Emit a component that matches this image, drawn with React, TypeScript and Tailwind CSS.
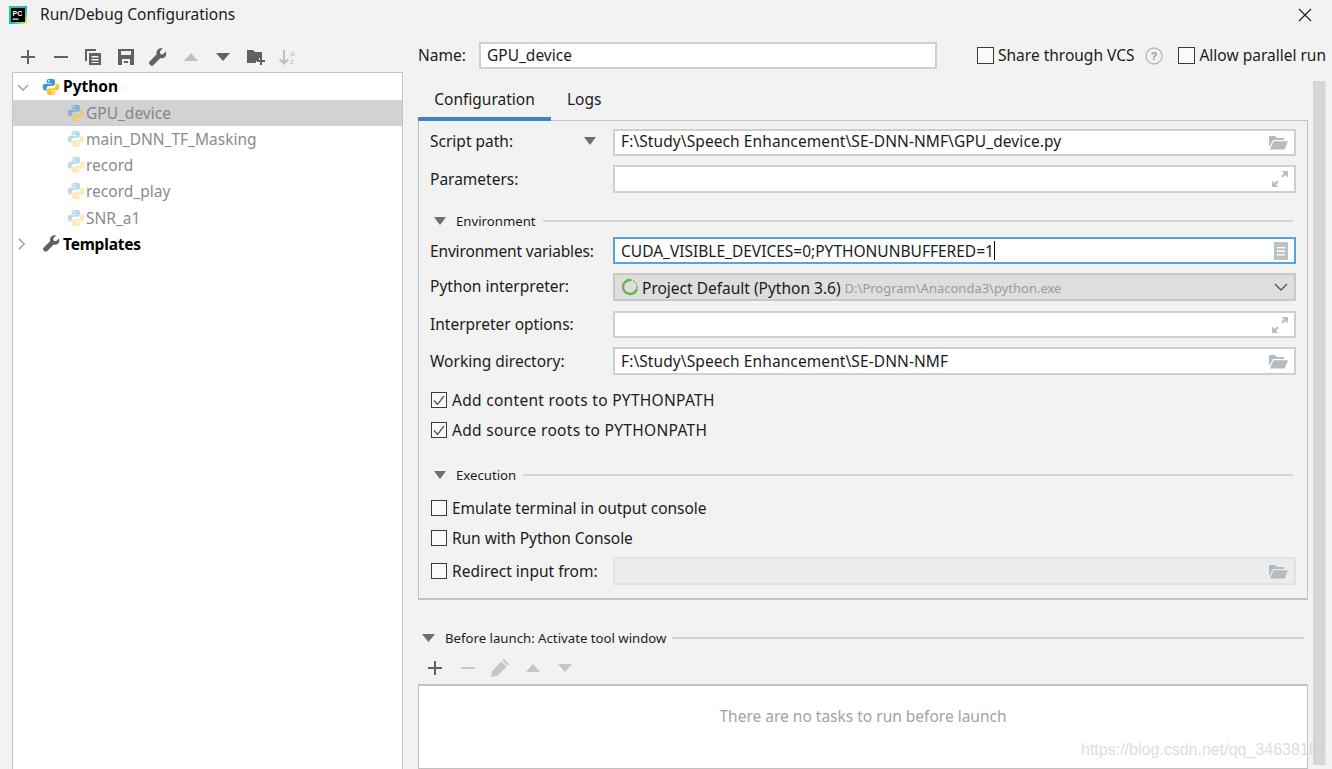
import { ReactNode } from "react";

const SNAKE =
  "M11.9 1C8 1 6.3 2.1 6.3 4v2.5h5.9v1H4.1C2 7.5 1 9.4 1 12c0 2.6 1 4.5 3 4.5h2.2v-3c0-1.9 1.5-3.3 3.4-3.3h4.9c1.6 0 2.8-1.2 2.8-2.8V4c0-2-2.1-3-5.4-3z";

function PythonIcon({ className = "" }: { className?: string }) {
  return (
    <svg viewBox="0 0 24 24" className={`h-[18px] w-[18px] shrink-0 ${className}`}>
      <path d={SNAKE} fill="#3d97cf" />
      <circle cx="9" cy="3.9" r="1.1" fill="#fff" />
      <g transform="rotate(180 12 12)">
        <path d={SNAKE} fill="#fbc62c" />
        <circle cx="9" cy="3.9" r="1.1" fill="#fff" />
      </g>
    </svg>
  );
}

function Triangle({ up = false, color = "#6e6e6e", w = 14 }: { up?: boolean; color?: string; w?: number }) {
  return (
    <svg width={w} height={8} viewBox="0 0 14 8" preserveAspectRatio="none" className="shrink-0">
      <path d={up ? "M7 0l7 8H0z" : "M0 0h14L7 8z"} fill={color} />
    </svg>
  );
}

function PlusIcon() {
  return (
    <svg width="14" height="14" viewBox="0 0 14 14">
      <path d="M6 0h2v6h6v2H8v6H6V8H0V6h6z" fill="#5f6265" />
    </svg>
  );
}

function MinusIcon({ color = "#5f6265" }: { color?: string }) {
  return (
    <svg width="14" height="14" viewBox="0 0 14 14">
      <path d="M0 6h14v2H0z" fill={color} />
    </svg>
  );
}

function WrenchIcon({ color = "#5f6265", size = 18 }: { color?: string; size?: number }) {
  return (
    <svg width={size} height={size} viewBox="0 0 18 18">
      <path
        d="M16.8 3.6l-3 3-2.4-.6-.6-2.4 3-3c-2-.7-4.2-.1-5.4 1.4-1 1.3-1.2 2.9-.7 4.3L.6 13.6c-.7.7-.7 1.9 0 2.7l.9.9c.8.7 2 .7 2.7 0L11.5 10c1.4.5 3 .3 4.2-.7 1.5-1.2 1.9-3.7 1.1-5.7z"
        fill={color}
      />
    </svg>
  );
}

function FolderOpenIcon() {
  return (
    <svg width="19" height="15" viewBox="0 0 19 15" className="shrink-0">
      <path d="M0 1h6l2 2h7v2H4L1 11H0z" fill="#b4bcc3" />
      <path d="M4.6 6.2H19L15.6 14.5H0.8z" fill="#b4bcc3" />
    </svg>
  );
}

function ExpandIcon() {
  return (
    <svg width="16" height="16" viewBox="0 0 16 16" fill="#b9bfc4" className="shrink-0">
      <path d="M9.5 0H16v6.5l-2.4-2.4-2.7 2.7-1.7-1.7 2.7-2.7zM6.5 16H0V9.5l2.4 2.4 2.7-2.7 1.7 1.7-2.7 2.7z" />
    </svg>
  );
}

function Checkbox({ checked = false, big = false }: { checked?: boolean; big?: boolean }) {
  return (
    <span
      className={`flex shrink-0 items-center justify-center border-[1.5px] border-[#3a3a3a] bg-[#fafafa] ${
        big ? "h-[17px] w-[17px]" : "h-[16px] w-[16px]"
      }`}
    >
      {checked && (
        <svg width="12" height="11" viewBox="0 0 12 11" fill="none">
          <path d="M1 5.5l3.5 4L11 1" stroke="#555" strokeWidth="1.3" />
        </svg>
      )}
    </span>
  );
}

function CheckRow({ label, checked, className = "" }: { label: string; checked?: boolean; className?: string }) {
  return (
    <div className={`flex h-[20px] items-center gap-[5px] pl-px ${className}`}>
      <Checkbox checked={checked} />
      <span>{label}</span>
    </div>
  );
}

function Field({
  label,
  text,
  icon,
  className = "",
  h = "h-[27px]",
  boxClass = "border-[#cfcfcf] bg-white",
  lift = "",
  children,
}: {
  label?: ReactNode;
  text?: string;
  icon?: ReactNode;
  className?: string;
  h?: string;
  boxClass?: string;
  lift?: string;
  children?: ReactNode;
}) {
  return (
    <div className={`flex items-center ${h} ${className}`}>
      <div className={`flex w-[183px] shrink-0 items-center ${lift}`}>{label}</div>
      <div className={`flex h-full flex-1 items-center justify-between border-2 pl-[6px] pr-[6px] ${boxClass}`}>
        {children ?? <span className={`tracking-[0.09px] ${lift}`}>{text}</span>}
        {icon}
      </div>
    </div>
  );
}

function SectionTitle({ label, className = "" }: { label: string; className?: string }) {
  return (
    <div className={`flex h-[20px] items-center pl-[4px] pr-[3px] ${className}`}>
      <Triangle w={12} />
      <span className="ml-[10px] text-[13.2px]">{label}</span>
      <div className="ml-[7px] h-[2px] flex-1 bg-[#d4d4d4]" />
    </div>
  );
}

const treeChildren = ["main_DNN_TF_Masking", "record", "record_play", "SNR_a1"];

export default function App() {
  return (
    <div className="relative flex h-[769px] w-[1332px] flex-col overflow-hidden bg-[#f2f2f2] font-['Noto_Sans','Open_Sans',sans-serif] text-[15.5px] leading-[18px] text-[#1c1c1c]">
      <div className="flex h-[30px] shrink-0 items-center pl-[9px] pr-[20px]">
        <svg width="18" height="18" viewBox="0 0 18 18" className="shrink-0">
          <defs>
            <linearGradient id="pc" x1="0" y1="0" x2="1" y2="1">
              <stop offset="0" stopColor="#21d789" />
              <stop offset="0.55" stopColor="#16b6c9" />
              <stop offset="1" stopColor="#fcf84a" />
            </linearGradient>
          </defs>
          <rect width="18" height="18" fill="url(#pc)" />
          <rect x="2" y="2" width="14" height="14" fill="#000" />
          <text x="3.5" y="9.5" fill="#fff" fontSize="7" fontWeight="700" fontFamily="Liberation Sans">
            PC
          </text>
          <rect x="3.500" y="12.500" width="6" height="1.200" fill="#fff" />
        </svg>
        <span className="mb-[2px] ml-[13px]">Run/Debug Configurations</span>
        <svg width="14" height="14" viewBox="0 0 14 14" className="ml-auto">
          <path d="M1 1l12 12M13 1L1 13" stroke="#222" strokeWidth="1.2" fill="none" />
        </svg>
      </div>

      <div className="flex min-h-0 flex-1">
        <div className="flex w-[403px] shrink-0 flex-col pl-[12px] pt-[12px]">
          <div className="flex h-[30px] shrink-0 items-center">
            {[
              <PlusIcon />,
              <MinusIcon />,
              <svg width="16" height="16" viewBox="0 0 16 16">
                <path d="M0 0h11v2H2v10H0z" fill="#5f6265" />
                <path fillRule="evenodd" d="M4 4h12v12H4zM6.5 7v1.5h7V7zm0 3v1.5h7V10zm0 3v1h7v-1z" fill="#5f6265" />
              </svg>,
              <svg width="16" height="16" viewBox="0 0 16 16">
                <path fillRule="evenodd" d="M0 0h16v16H0zM3 2v4h10V2zM4 10v6h8v-6z" fill="#5f6265" />
                <path d="M6 12h4v2H6z" fill="#5f6265" />
              </svg>,
              <WrenchIcon />,
              <Triangle up color="#c0c0c0" />,
              <Triangle color="#5f6265" />,
              <svg width="18" height="16" viewBox="0 0 18 16">
                <path d="M0 1h6l2 2h7v6h-3v3H9v2H0z" fill="#5f6265" />
                <path d="M13 10h2v3h3v2h-3v3h-2v-3h-3v-2h3z" fill="#5f6265" transform="translate(0 -2)" />
              </svg>,
              <svg width="18" height="17" viewBox="0 0 18 17">
                <path d="M4 1h2v11l2.5-2.5L10 11l-5 5-5-5 1.500-1.500L4 12z" fill="#c0c0c0" />
                <text x="11" y="7" fontSize="8" fill="#c0c0c0" fontFamily="Liberation Sans">a</text>
                <text x="11" y="15" fontSize="8" fill="#c0c0c0" fontFamily="Liberation Sans">z</text>
              </svg>,
            ].map((icon, i) => (
              <div key={i} className="flex w-[32.5px] shrink-0 items-center justify-center">
                {icon}
              </div>
            ))}
          </div>

          <div className="flex-1 border-x border-t border-[#c4c4c4] bg-white pt-px">
            <div className="flex h-[26px] items-center">
              <svg width="12" height="7" viewBox="0 0 14 8" className="ml-[4px]" fill="none">
                <path d="M1 1l6 6 6-6" stroke="#a8a8a8" strokeWidth="1.8" />
              </svg>
              <PythonIcon className="ml-[13px]" />
              <span className="mb-[2px] ml-[3px] font-bold text-black">Python</span>
            </div>
            <div className="flex h-[26px] items-center bg-[#d2d2d2] pl-[54px] text-[#84878a]">
              <PythonIcon className="opacity-50" />
              <span className="ml-[1px]">GPU_device</span>
            </div>
            {treeChildren.map((name) => (
              <div key={name} className="flex h-[26.2px] items-center pl-[54px] text-[#898c8f]">
                <PythonIcon className="opacity-35" />
                <span className="ml-[1px]">{name}</span>
              </div>
            ))}
            <div className="flex h-[26px] items-center">
              <svg width="7" height="12" viewBox="0 0 8 14" className="ml-[5px]" fill="none">
                <path d="M1 1l6 6-6 6" stroke="#a8a8a8" strokeWidth="1.8" />
              </svg>
              <span className="ml-[18px]">
                <WrenchIcon size={17} />
              </span>
              <span className="ml-[3px] font-bold tracking-[-0.2px] text-black">Templates</span>
            </div>
          </div>
        </div>

        <div className="ml-[15px] flex min-w-0 flex-1 flex-col pt-[12px]">
          <div className="flex h-[27px] shrink-0 items-center">
            <span className="mb-[2px] w-[61px] shrink-0">Name:</span>
            <div className="flex h-full w-[458px] shrink-0 items-center border-2 border-[#d0d0d0] bg-white pb-[2px] pl-[6px]">
              GPU_device
            </div>
            <span className="ml-[40px]">
              <Checkbox big />
            </span>
            <span className="mb-[2px] ml-[4px]">Share through VCS</span>
            <svg width="18" height="18" viewBox="0 0 18 18" className="ml-[11px] shrink-0">
              <circle cx="9" cy="9" r="8" fill="none" stroke="#b5b5b5" strokeWidth="1.3" />
              <text x="9" y="13" textAnchor="middle" fontSize="11" fontWeight="700" fill="#9a9a9a" fontFamily="Liberation Sans">
                ?
              </text>
            </svg>
            <span className="ml-[15px]">
              <Checkbox big />
            </span>
            <span className="mb-[2px] ml-[4px] whitespace-nowrap">Allow parallel run</span>
          </div>

          <div className="mt-[12px] flex min-h-0 flex-1">
            <div className="flex w-[890px] shrink-0 flex-col">
              <div className="relative z-10 flex h-[40px] shrink-0">
                <div className="flex w-[133px] items-center justify-center border-b-4 border-[#4083c9] pb-[1px]">
                  Configuration
                </div>
                <div className="ml-[16px] flex items-center pb-[4px]">Logs</div>
              </div>

              <div className="-mt-px h-[480px] shrink-0 border border-b-2 border-[#c2c2c2] pl-[11px] pr-[11px]">
                <Field
                  className="mt-[8px]"
                  lift="mb-[3px]"
                  label={
                    <>
                      <span className="w-[154px]">Script path:</span>
                      <Triangle w={12} />
                    </>
                  }
                  text="F:\Study\Speech Enhancement\SE-DNN-NMF\GPU_device.py"
                  icon={<FolderOpenIcon />}
                />
                <Field className="mt-[9px]" h="h-[28px]" label="Parameters:" icon={<ExpandIcon />} />

                <SectionTitle label="Environment" className="mt-[18px]" />

                <Field
                  className="mt-[6px]"
                  label={<span className="tracking-[-0.15px]">Environment variables:</span>}
                  boxClass="border-[#5aa2dc] bg-white"
                  icon={
                    <svg width="14" height="18" viewBox="0 0 14 18" className="shrink-0">
                      <path fillRule="evenodd" d="M0 0h14v18H0zM3 5v1.500h8V5zm0 3.500V10h8V8.500zM3 12v1.500h8V12z" fill="#bcc1c5" />
                    </svg>
                  }
                >
                  <span className="flex items-center">
                    CUDA_VISIBLE_DEVICES=0;PYTHONUNBUFFERED=1
                    <span className="h-[19px] w-px bg-black" />
                  </span>
                </Field>

                <Field
                  className="mt-[9px]"
                  h="h-[28px]"
                  label={<span className="mb-[2px]">Python interpreter:</span>}
                  boxClass="border-[#c9c9c9] bg-[#dedede]"
                  icon={
                    <svg width="14" height="8" viewBox="0 0 14 8" fill="none" className="shrink-0">
                      <path d="M1 1l6 6 6-6" stroke="#555" strokeWidth="1.3" />
                    </svg>
                  }
                >
                  <span className="flex items-center whitespace-nowrap pt-[1px]">
                    <svg width="18" height="18" viewBox="0 0 18 18" fill="none" className="mb-[2px] mr-[3px] shrink-0">
                      <circle cx="9" cy="9" r="7" stroke="#6cb64f" strokeWidth="2.400" strokeDasharray="32 12" strokeDashoffset="-2" />
                      <circle cx="9" cy="9" r="7" stroke="#6cb64f" strokeWidth="1.600" strokeDasharray="1.500 1.500" />
                    </svg>
                    Project Default (Python 3.6)
                    <span className="ml-[4px] text-[13px] text-[#9b9b9b]">D:\Program\Anaconda3\python.exe</span>
                  </span>
                </Field>

                <Field className="mt-[10px]" lift="mb-[2px]" label="Interpreter options:" icon={<ExpandIcon />} />
                <Field
                  className="mt-[9px]"
                  h="h-[28px]"
                  label="Working directory:"
                  text="F:\Study\Speech Enhancement\SE-DNN-NMF"
                  icon={<FolderOpenIcon />}
                />

                <CheckRow className="mt-[15px] tracking-[0.3px]" checked label="Add content roots to PYTHONPATH" />
                <CheckRow className="mt-[10px] tracking-[0.3px]" checked label="Add source roots to PYTHONPATH" />

                <SectionTitle label="Execution" className="mt-[25px]" />

                <CheckRow className="mt-[13px] tracking-[-0.05px]" label="Emulate terminal in output console" />
                <CheckRow className="mt-[10px] tracking-[-0.05px]" label="Run with Python Console" />
                <Field
                  className="mt-[9px]"
                  h="h-[28px]"
                  label={
                    <div className="mb-[1px] flex items-center gap-[5px] pl-px">
                      <Checkbox />
                      <span>Redirect input from:</span>
                    </div>
                  }
                  boxClass="border-[#e2e2e2] bg-[#ececec]"
                  icon={<FolderOpenIcon />}
                />
              </div>

              <div className="mt-[28px] flex h-[20px] shrink-0 items-center pl-[4px] pr-[4px]">
                <Triangle w={13} />
                <span className="ml-[10px] text-[13.2px]">Before launch: Activate tool window</span>
                <div className="ml-[6px] h-[1.5px] flex-1 bg-[#d0d0d0]" />
              </div>

              <div className="mt-[8px] flex h-[24px] shrink-0 items-center pl-[1px]">
                {[
                  <PlusIcon />,
                  <MinusIcon color="#c6c6c6" />,
                  <svg width="18" height="18" viewBox="0 0 18 18">
                    <path d="M13 0l5 5-1.500 1.500-5-5zM10.500 2.500l5 5L6 17l-6 1 1-6z" fill="#c6c6c6" />
                  </svg>,
                  <Triangle up color="#c6c6c6" />,
                  <Triangle color="#c6c6c6" />,
                ].map((icon, i) => (
                  <div key={i} className="flex w-[32.500px] shrink-0 items-center justify-center">
                    {icon}
                  </div>
                ))}
              </div>

              <div className="mt-[4px] flex h-[85px] shrink-0 items-start justify-center border border-t-2 border-[#c2c2c2] bg-white pt-[21px] text-[#a3a3a3]">
                There are no tasks to run before launch
              </div>
            </div>

            <div className="ml-[5px] mb-[4px] w-[13px] shrink-0 border-r border-[#e6e6e6] bg-[#d6d6d6]" />
          </div>
        </div>
      </div>

      <div className="absolute left-[1081px] top-[741px] whitespace-nowrap font-['Liberation_Sans',sans-serif] text-[16px] text-[#d4d4d4]/80">
        https://blog.csdn.net/qq_34638181
      </div>
    </div>
  );
}
